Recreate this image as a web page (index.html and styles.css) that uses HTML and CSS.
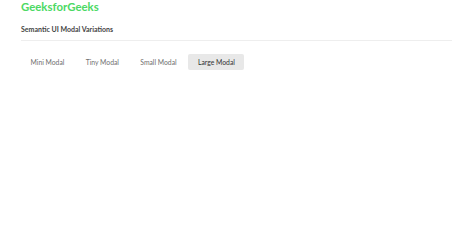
FILE: index.html
```html
<!DOCTYPE html>
<html lang="en">
<head>
<meta charset="utf-8">
<title>Semantic UI Modal Variations</title>
<link rel="stylesheet" href="styles.css">
</head>
<body>
<div class="container">
  <h2 class="brand">GeeksforGeeks</h2>
  <h4 class="subtitle">Semantic UI Modal Variations</h4>
  <div class="buttons">
    <button class="btn">Mini Modal</button>
    <button class="btn">Tiny Modal</button>
    <button class="btn">Small Modal</button>
    <button class="btn active">Large Modal</button>
  </div>
</div>
</body>
</html>
```

FILE: styles.css
```css
html, body {
  margin: 0;
  padding: 0;
  background: #ffffff;
}
body {
  font-family: Lato, "Helvetica Neue", Arial, sans-serif;
  color: rgba(0, 0, 0, 0.87);
}
.container {
  margin: 0 22px 0 21px;
  display: flex;
  flex-direction: column;
}
.brand {
  margin: 0;
  font-size: 11.4px;
  line-height: 14px;
  font-weight: 700;
  color: #4cd964;
}
.subtitle {
  margin: 11px 0 0 0;
  padding-bottom: 6px;
  font-size: 7px;
  line-height: 9px;
  font-weight: 700;
  color: #444;
  border-bottom: 1px solid #eeeeee;
}
.buttons {
  display: flex;
  gap: 2.3px;
  margin-top: 13px;
}
.btn {
  font-family: Lato, "Helvetica Neue", Arial, sans-serif;
  font-size: 6.8px;
  line-height: 7px;
  padding: 4.5px 9.5px;
  border: none;
  border-radius: 2px;
  background: transparent;
  color: #707070;
  cursor: pointer;
}
.btn.active {
  background: #e8e8e8;
  color: #333;
}
```
